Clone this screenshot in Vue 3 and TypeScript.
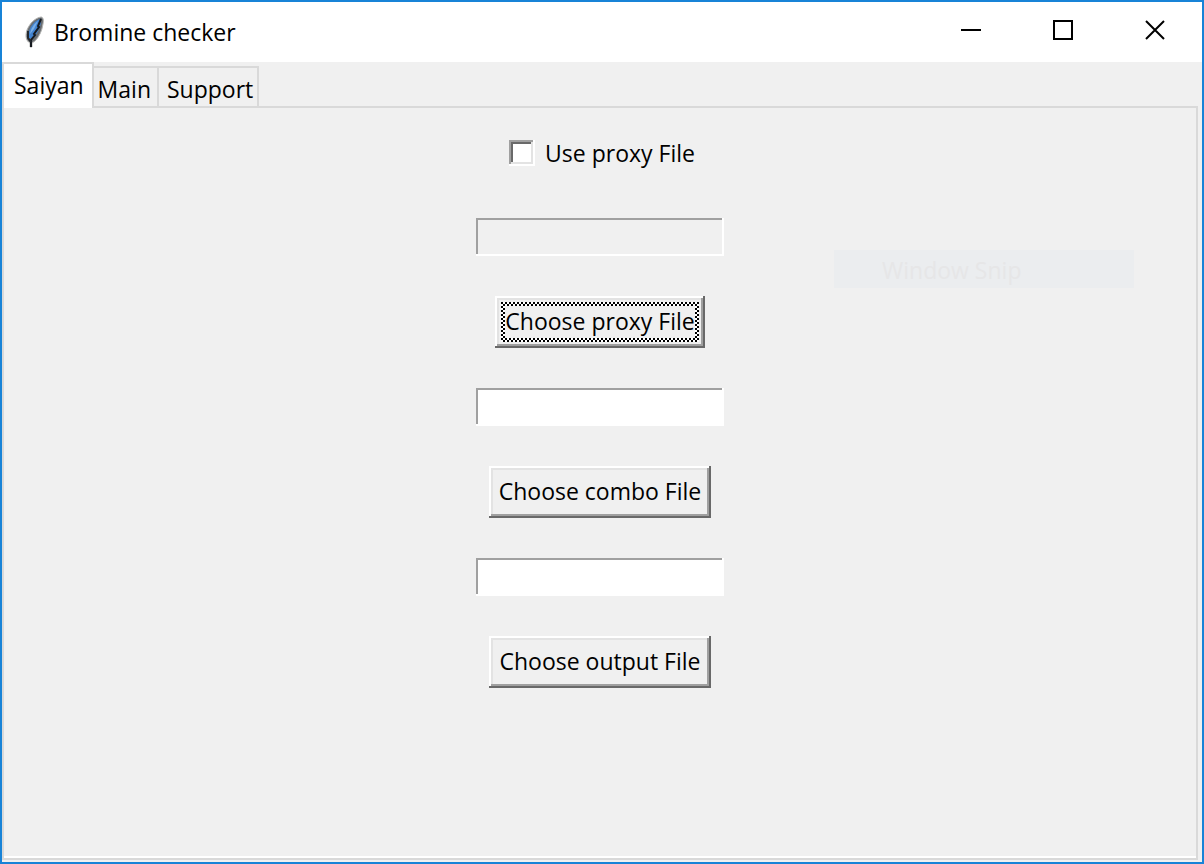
<script setup lang="ts">
import { ref } from 'vue'

const tabs: string[] = ['Saiyan', 'Main', 'Support']
const activeTab = ref<string>('Saiyan')
const useProxy = ref<boolean>(false)

interface FileField {
  id: string
  action: string
  focused: boolean
}

const fields: FileField[] = [
  { id: 'proxy', action: 'Choose proxy File', focused: true },
  { id: 'combo', action: 'Choose combo File', focused: false },
  { id: 'output', action: 'Choose output File', focused: false },
]
const paths = ref<Record<string, string>>({ proxy: '', combo: '', output: '' })
</script>

<template>
  <div class="window">
    <header class="titlebar">
      <svg class="feather" viewBox="0 0 20 32" aria-hidden="true">
        <path d="M17 1 C19 1 20 4 19 8 C18 15 15 21 11 25 L8 27 L8 31 L6 31 L6 27 C2 25 1 20 3 14 C6 7 11 2 17 1 Z" fill="#6a6e72" stroke="#b4b4b2" stroke-width="1" />
        <path d="M16 3 C10 5 6 11 5 16 L5 22 L8 23 C13 18 16 13 17 6 Z" fill="#4283d0" />
        <path d="M14 5 C10 8 7 12 6 18 L10 13 Z" fill="#79aee6" />
        <path d="M17 3 L14 10 L15 11 L10 18 L11 19 L7 24 L7 31" fill="none" stroke="#161a20" stroke-width="2" />
        <path d="M4 15 L4 22 L7 26" fill="none" stroke="#24292f" stroke-width="2" />
      </svg>
      <h1 class="title">Bromine checker</h1>
      <div class="controls">
        <button type="button" class="control" aria-label="Minimize">
          <svg viewBox="0 0 20 20"><path d="M0 10H20" shape-rendering="crispEdges" /></svg>
        </button>
        <button type="button" class="control" aria-label="Maximize">
          <svg viewBox="0 0 20 20"><path d="M1 1H19V19H1Z" shape-rendering="crispEdges" /></svg>
        </button>
        <button type="button" class="control" aria-label="Close">
          <svg viewBox="0 0 20 20"><path d="M1 1L19 19M19 1L1 19" /></svg>
        </button>
      </div>
    </header>

    <nav class="tabs" role="tablist">
      <button
        v-for="tab in tabs"
        :key="tab"
        type="button"
        role="tab"
        class="tab"
        :class="{ active: tab === activeTab }"
        :aria-selected="tab === activeTab"
        @click="activeTab = tab"
      >{{ tab }}</button>
    </nav>

    <main class="panel" role="tabpanel">
      <label class="check">
        <input v-model="useProxy" type="checkbox" class="box" />
        <span>Use proxy File</span>
      </label>
      <template v-for="field in fields" :key="field.id">
        <input
          v-model="paths[field.id]"
          type="text"
          class="entry"
          :aria-label="field.action"
          :disabled="field.id === 'proxy' && !useProxy"
        />
        <button type="button" class="action" :class="{ focused: field.focused }">
          <span class="caption">{{ field.action }}</span>
        </button>
      </template>
    </main>

    <div class="ghost">Window Snip</div>
  </div>
</template>

<style>
body {
  margin: 0;
}
</style>

<style scoped>
.window {
  position: relative;
  box-sizing: border-box;
  min-height: 100vh;
  display: flex;
  flex-direction: column;
  border: 2px solid #1883d7;
  background: #f0f0f0;
  color: #000;
  font-family: "Open Sans", "Noto Sans", sans-serif;
  font-size: 23px;
  line-height: 32px;
}

button,
input {
  margin: 0;
  padding: 0;
  border: 0;
  border-radius: 0;
  background: none;
  color: inherit;
  font: inherit;
}

.titlebar {
  display: flex;
  align-items: center;
  height: 60px;
  padding-left: 22px;
  background: #fff;
}

.feather {
  width: 20px;
  height: 32px;
  margin-right: 10px;
}

.title {
  margin: 0;
  font-size: 23px;
  font-weight: 400;
}

.controls {
  display: flex;
  align-self: stretch;
  margin-left: auto;
  padding-right: 1px;
}

.control {
  display: flex;
  justify-content: center;
  width: 92px;
  padding-top: 18px;
}

.control svg {
  width: 20px;
  height: 20px;
  fill: none;
  stroke: #000;
  stroke-width: 2;
}

.tabs {
  display: flex;
  align-items: flex-end;
  height: 46px;
  flex: none;
}

.tab {
  box-sizing: border-box;
  height: 42px;
  padding: 4px 6px 0 4px;
  border: 2px solid #d9d9d9;
  border-left-width: 0;
}

.tab:last-child {
  padding: 4px 4px 0 8px;
}

.tab.active {
  z-index: 1;
  height: 46px;
  padding: 0 8px 2px 10px;
  border-left-width: 2px;
  border-bottom: 0;
  background: #fff;
}

.panel {
  flex: 1;
  display: flex;
  flex-direction: column;
  align-items: center;
  gap: 40px;
  margin: -2px 4px 2px 0;
  padding: 30px 0 40px;
  border: 2px solid #d9d9d9;
  box-shadow: inset 0 -2px #fff;
}

.check {
  display: flex;
  align-items: center;
  gap: 10px;
  height: 30px;
  margin-bottom: 10px;
  padding-left: 4px;
}

.box {
  appearance: none;
  width: 26px;
  height: 26px;
  background: #fff;
  box-shadow: inset -2px -2px #fff, inset 2px 2px #a0a0a0, inset -4px -4px #e3e3e3, inset 4px 4px #696969;
}

.box:checked {
  background: linear-gradient(#000, #000) center / 10px 10px no-repeat #fff;
}

.entry {
  box-sizing: border-box;
  width: 248px;
  height: 38px;
  padding: 2px 4px;
  background: #fff;
  outline: 0;
  box-shadow: inset -2px -2px #fff, inset 2px 2px #a0a0a0;
}

.entry:disabled {
  background: #f0f0f0;
}

.action {
  padding: 6px;
  box-shadow: inset -2px -2px #696969, inset 2px 2px #fff, inset -4px -4px #a0a0a0, inset 4px 4px #e3e3e3;
}

.caption {
  display: block;
  padding-bottom: 2px;
  border: 4px solid transparent;
  line-height: 30px;
}

.focused .caption {
  background:
    linear-gradient(#f0f0f0, #f0f0f0) padding-box,
    repeating-conic-gradient(#fff 0 25%, #000 0 50%) 0 0 / 4px 4px border-box;
}

.ghost {
  position: absolute;
  top: 248px;
  left: 832px;
  box-sizing: border-box;
  width: 300px;
  height: 38px;
  padding: 4px 48px;
  background: #ebedef;
  color: #e6e6e7;
  pointer-events: none;
}
</style>
